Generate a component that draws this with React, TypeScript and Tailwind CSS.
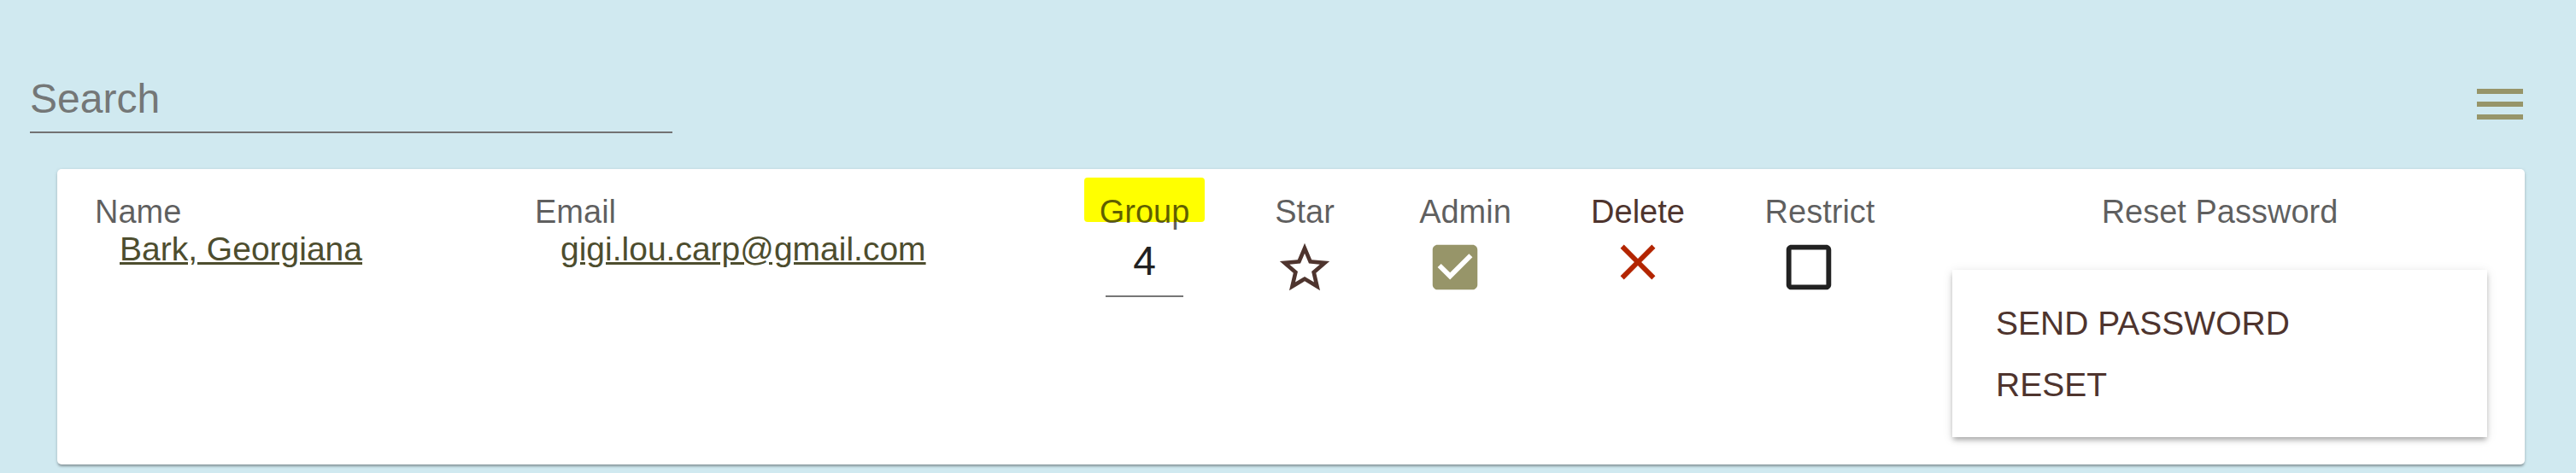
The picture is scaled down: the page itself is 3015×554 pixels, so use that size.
import React from 'react';

const Head = ({ label, className = '' }: { label: string; className?: string }) => (
  <div className={`h-[52px] whitespace-nowrap pt-[18px] text-[38px] leading-[44px] ${className}`}>{label}</div>
);

const Icon = ({ d, className = '' }: { d: string; className?: string }) => (
  <svg viewBox="0 0 24 24" className={`h-[70px] w-[70px] shrink-0 ${className}`} fill="currentColor">
    <path d={d} />
  </svg>
);

const paths = {
  menu: 'M3 18h18v-2H3v2zm0-5h18v-2H3v2zm0-7v2h18V6H3z',
  star: 'M22 9.24l-7.19-.62L12 2 9.19 8.63 2 9.24l5.46 4.73L5.82 21 12 17.27 18.18 21l-1.63-7.03L22 9.24zM12 15.4l-3.76 2.27 1-4.28-3.32-2.88 4.38-.38L12 6.1l1.71 4.04 4.38.38-3.32 2.88 1 4.28L12 15.4z',
  checked:
    'M19 3H5c-1.11 0-2 .9-2 2v14c0 1.1.89 2 2 2h14c1.11 0 2-.9 2-2V5c0-1.1-.89-2-2-2zm-9 14l-5-5 1.41-1.41L10 14.17l7.59-7.59L19 8l-9 9z',
  blank: 'M19 5v14H5V5h14m0-2H5c-1.1 0-2 .9-2 2v14c0 1.1.9 2 2 2h14c1.1 0 2-.9 2-2V5c0-1.1-.9-2-2-2z',
  close: 'M19 6.41L17.59 5 12 10.59 6.41 5 5 6.41 10.59 12 5 17.59 6.41 19 12 13.41 17.59 19 19 17.59 13.41 12z',
};

export default function App() {
  return (
    <div className="min-h-screen bg-[#d0e9f0] font-['Liberation_Sans',Arial,sans-serif] text-black/[0.63]">
      {/* search bar + menu button */}
      <div className="flex items-start justify-between pl-[35px] pr-[53px] pt-[86px]">
        <input
          placeholder="Search"
          className="h-[70px] w-[752px] border-b-2 border-[#727272] bg-transparent p-0 pb-[8px] text-[48px] text-[#212121] outline-none placeholder:text-[#747777]"
        />
        <svg viewBox="0 0 24 24" className="h-[72px] w-[72px] text-[#979569]" fill="currentColor">
          <path d={paths.menu} />
        </svg>
      </div>

      {/* user row */}
      <div className="ml-[67px] mr-[60px] mt-[40px] flex h-[346px] rounded-[5px] bg-white pl-[44px] pt-[10px] shadow-[0_3px_3px_-1px_rgba(0,0,0,0.3),0_1px_4px_0_rgba(0,0,0,0.14)]">
        <div className="w-[515px]">
          <Head label="Name" />
          <a href="#" className="mt-[10px] block pl-[29px] text-[39px] leading-[44px] text-[#4d4d2e] underline">
            Bark, Georgiana
          </a>
        </div>

        <div className="w-[643px]">
          <Head label="Email" />
          <a href="#" className="mt-[10px] block pl-[30px] text-[39px] leading-[44px] text-[#4d4d2e] underline">
            gigi.lou.carp@gmail.com
          </a>
        </div>

        <div className="w-[141px]">
          <Head label="Group" className="rounded-[4px] bg-[#ffff00] text-center" />
          <div className="mx-auto mt-[18px] w-[91px] border-b-2 border-[#767676] pb-[12px] text-center text-[48px] leading-[56px] text-[#212121]">
            4
          </div>
        </div>

        <div className="flex w-[234px] flex-col items-center">
          <Head label="Star" />
          <Icon d={paths.star} className="mt-[19px] text-[#4e342e]" />
        </div>

        <div className="flex w-[142px] flex-col items-center">
          <Head label="Admin" />
          <Icon d={paths.checked} className="mr-[24px] mt-[18px] text-[#979569]" />
        </div>

        <div className="flex w-[262px] flex-col items-center">
          <Head label="Delete" className="text-[#4e342e]" />
          <Icon d={paths.close} className="mt-[12px] text-[#b32500]" />
        </div>

        <div className="flex w-[164px] flex-col items-center">
          <Head label="Restrict" />
          <Icon d={paths.blank} className="mr-[26px] mt-[18px] text-[#212121]" />
        </div>

        <div className="ml-[73px] w-[626px]">
          <Head label="Reset Password" className="text-center" />
          <div className="mt-[56px] bg-white py-[26px] shadow-[0_4px_6px_-1px_rgba(0,0,0,0.3),0_2px_12px_0_rgba(0,0,0,0.1)]">
            {['SEND PASSWORD', 'RESET'].map((item) => (
              <div key={item} className="flex h-[72px] items-center pl-[51px] text-[39px] leading-[57px] text-[#4e342e]">
                {item}
              </div>
            ))}
          </div>
        </div>
      </div>
    </div>
  );
}
